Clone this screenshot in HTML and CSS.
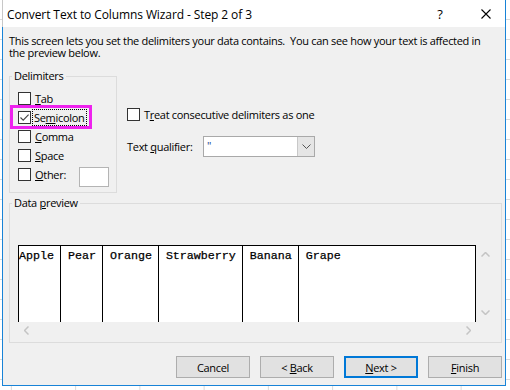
FILE: index.html
```html
<!DOCTYPE html>
<html lang="en">
<head>
    <meta charset="UTF-8">
    <title>Convert Text to Columns Wizard - Step 2 of 3</title>
    <link rel="stylesheet" href="styles.css">
</head>
<body>
    <div class="window">
        <!-- Title Bar -->
        <div class="titlebar">
            <span class="title">Convert Text to Columns Wizard - Step 2 of 3</span>
            <span class="help">?</span>
            <span class="close">
                <svg width="10" height="10" viewBox="0 0 10 10"><path d="M0.5 0.5 L9.5 9.5 M9.5 0.5 L0.5 9.5" stroke="#000" stroke-width="1.1"/></svg>
            </span>
        </div>

        <div class="content">
            <p class="intro">This screen lets you set the delimiters your data contains.&nbsp; You can see how your text is affected in the preview below.</p>

            <!-- Delimiter options -->
            <div class="options">
                <fieldset class="group delimiters">
                    <legend>Delimiters</legend>
                    <label class="check"><span class="box"></span><span><u>T</u>ab</span></label>
                    <label class="check marked">
                        <span class="box">
                            <svg width="11" height="11" viewBox="0 0 11 11"><path d="M1.5 5.5 L4.2 8.2 L9.6 2.6" fill="none" stroke="#444" stroke-width="1.1"/></svg>
                        </span>
                        <span class="focus">Se<u>m</u>icolon</span>
                    </label>
                    <label class="check"><span class="box"></span><span><u>C</u>omma</span></label>
                    <label class="check"><span class="box"></span><span><u>S</u>pace</span></label>
                    <label class="check other"><span class="box"></span><span><u>O</u>ther:</span><span class="textbox"></span></label>
                </fieldset>

                <div class="side">
                    <label class="check consecutive"><span class="box"></span><span>T<u>r</u>eat consecutive delimiters as one</span></label>
                    <div class="qualifier">
                        <span class="qualifier-label">Text <u>q</u>ualifier:</span>
                        <div class="combo">
                            <span class="combo-value">"</span>
                            <span class="combo-arrow">
                                <svg width="9" height="5" viewBox="0 0 9 5"><path d="M0.5 0.5 L4.5 4.5 L8.5 0.5" fill="none" stroke="#555" stroke-width="1"/></svg>
                            </span>
                        </div>
                    </div>
                </div>
            </div>

            <!-- Data preview -->
            <fieldset class="group preview">
                <legend>Data <u>p</u>review</legend>
                <div class="preview-box">
                    <div class="sheet">
                        <div class="col" style="width: 7ch">Apple</div>
                        <div class="col" style="width: 6ch">Pear</div>
                        <div class="col" style="width: 8ch">Orange</div>
                        <div class="col" style="width: 12ch">Strawberry</div>
                        <div class="col" style="width: 8ch">Banana</div>
                        <div class="col last">Grape</div>
                    </div>
                    <div class="vscroll">
                        <svg width="9" height="5" viewBox="0 0 9 5"><path d="M0.5 4.5 L4.5 0.5 L8.5 4.5" fill="none" stroke="#c4c4c4" stroke-width="1.5"/></svg>
                        <svg width="9" height="5" viewBox="0 0 9 5"><path d="M0.5 0.5 L4.5 4.5 L8.5 0.5" fill="none" stroke="#c4c4c4" stroke-width="1.5"/></svg>
                    </div>
                    <div class="hscroll">
                        <svg width="5" height="9" viewBox="0 0 5 9"><path d="M4.5 0.5 L0.5 4.5 L4.5 8.5" fill="none" stroke="#c4c4c4" stroke-width="1.5"/></svg>
                        <svg width="5" height="9" viewBox="0 0 5 9"><path d="M0.5 0.5 L4.5 4.5 L0.5 8.5" fill="none" stroke="#c4c4c4" stroke-width="1.5"/></svg>
                    </div>
                    <div class="corner"></div>
                </div>
            </fieldset>

            <!-- Buttons -->
            <div class="buttons">
                <button>Cancel</button>
                <button>&lt; <u>B</u>ack</button>
                <button class="default"><u>N</u>ext &gt;</button>
                <button><u>F</u>inish</button>
            </div>
        </div>
    </div>
</body>
</html>
```

FILE: styles.css
```css
body {
    margin: 0;
    height: 390px;
    overflow: hidden;
    font-family: "Open Sans", "Noto Sans", sans-serif;
    font-size: 11px;
    letter-spacing: -0.3px;
    color: #000;
    background-color: #fff;
    background-image:
        linear-gradient(90deg, transparent 11px, #dadada 11px, #dadada 12px, transparent 12px),
        linear-gradient(180deg, transparent 19px, #dadada 19px);
    background-size: 64.25px 20px;
}
.window {
    width: 504px;
    height: 386px;
    margin-left: 2px;
    box-sizing: border-box;
    border: 1px solid #1883d7;
    border-top: none;
    background: #f0f0f0;
    display: flex;
    flex-direction: column;
}
.titlebar {
    height: 27px;
    background: #fff;
    display: flex;
    align-items: center;
    padding-left: 4px;
    margin-left: -1px;
    border-left: 1px solid #c8c8c8;
}
.title {
    font-size: 12px;
    letter-spacing: -0.1px;
    padding-top: 1px;
}
.help {
    margin-left: auto;
    width: 30px;
    text-align: center;
    font-size: 13px;
}
.close {
    display: flex;
    margin-left: 26px;
    margin-right: 14px;
}
.content {
    flex: 1;
    padding: 8px 3px 0 6px;
}
.intro {
    margin: 0;
    max-width: 480px;
    line-height: 12px;
}

/* Group boxes */
.group {
    margin: 0;
    border: 1px solid #dcdcdc;
    box-sizing: border-box;
    min-width: 0;
}
.group legend {
    padding: 0 2px;
    margin-left: -6px;
    line-height: 12px;
}
.options {
    display: flex;
    margin-top: 11px;
}
.delimiters {
    width: 108px;
    padding: 7px 7px 5px 8px;
}

/* Checkboxes */
.check {
    display: flex;
    align-items: center;
    height: 19px;
    position: relative;
}
.box {
    width: 13px;
    height: 13px;
    box-sizing: border-box;
    border: 1px solid #333;
    background: #fff;
    margin-right: 4px;
    display: flex;
    align-items: center;
    justify-content: center;
    flex-shrink: 0;
}
.focus {
    outline: 1px dotted #000;
    outline-offset: 0;
    padding: 0 1px;
    margin-left: -2px;
    line-height: 15px;
}
.marked::after {
    content: "";
    position: absolute;
    left: -8px;
    top: -3px;
    width: 82px;
    height: 24px;
    box-sizing: border-box;
    border: 3px solid #ee22ee;
}
.other {
    height: 22px;
    align-items: flex-start;
}
.other .box {
    margin-top: 3px;
}
.other > span:nth-child(2) {
    line-height: 19px;
}
.textbox {
    margin-left: auto;
    margin-top: 2px;
    width: 30px;
    height: 20px;
    box-sizing: border-box;
    background: #fff;
    border: 1px solid #b4b4b4;
}

/* Right column */
.side {
    margin-left: 10px;
    padding-top: 35px;
}
.qualifier {
    display: flex;
    align-items: center;
    margin-top: 12px;
}
.qualifier-label {
    width: 76px;
}
.combo {
    width: 112px;
    height: 21px;
    box-sizing: border-box;
    background: #fff;
    border: 1px solid #a9a9a9;
    display: flex;
}
.combo-value {
    flex: 1;
    padding-left: 3px;
    color: #1a3f8f;
    line-height: 17px;
}
.combo-arrow {
    width: 16px;
    background: #e5e5e5;
    border-left: 1px solid #c8c8c8;
    display: flex;
    align-items: center;
    justify-content: center;
}

/* Data preview */
.preview {
    margin-top: 4px;
    padding: 36px 7px 3px 8px;
}
.preview-box {
    display: grid;
    grid-template-columns: 458px 18px;
    grid-template-rows: 77px 17px;
}
.sheet {
    display: flex;
    overflow: hidden;
    background: #fff;
    border: 1px solid #000;
    border-bottom: none;
    font-family: "Liberation Mono", "Courier New", monospace;
    font-size: 11.67px;
    letter-spacing: 0;
    -webkit-text-stroke: 0.25px #000;
}
.col {
    flex-shrink: 0;
    box-sizing: border-box;
    border-left: 1px solid #000;
    padding: 3px 0 0 7px;
    line-height: 14px;
    white-space: nowrap;
}
.col:first-child {
    margin-left: -8px;
}
.col.last {
    flex: 1;
}
.vscroll {
    display: flex;
    flex-direction: column;
    align-items: center;
    justify-content: space-between;
    padding: 7px 0 7px 1px;
}
.hscroll {
    display: flex;
    align-items: center;
    justify-content: space-between;
    padding: 0 5px 0 6px;
}

/* Buttons */
.buttons {
    display: flex;
    justify-content: flex-end;
    gap: 10px;
    margin-top: 13px;
}
button {
    width: 74px;
    height: 22px;
    box-sizing: border-box;
    background: #e1e1e1;
    border: 1px solid #adadad;
    border-radius: 0;
    padding: 0;
    font-family: inherit;
    font-size: 11px;
    letter-spacing: inherit;
    color: #000;
}
button.default {
    border: 2px solid #0078d7;
}
```
